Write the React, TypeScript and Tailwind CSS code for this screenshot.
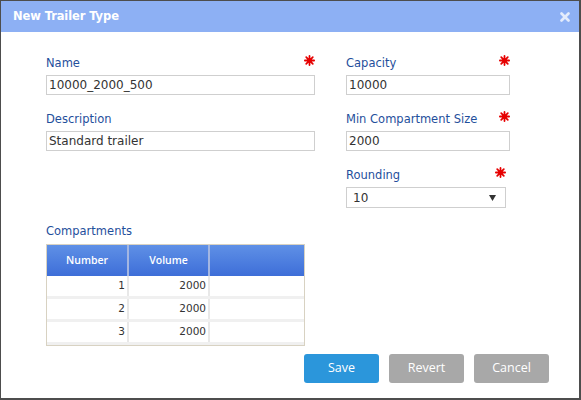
import React from 'react';

const Asterisk: React.FC = () => (
  <svg width="11" height="11" viewBox="0 0 10 10" className="shrink-0 -mt-[0.5px]">
    <g stroke="#e60000" strokeWidth="1.6" strokeLinecap="round">
      <line x1="5" y1="0.8" x2="5" y2="9.2" />
      <line x1="0.8" y1="5" x2="9.2" y2="5" />
      <line x1="2" y1="2" x2="8" y2="8" />
      <line x1="8" y1="2" x2="2" y2="8" />
    </g>
    <circle cx="5" cy="5" r="2.3" fill="#e60000" />
  </svg>
);

const Field: React.FC<{ label: string; value: string; required?: boolean }> = ({ label, value, required }) => (
  <div className="mb-4">
    <div className="flex justify-between items-start h-5">
      <span className="text-[11.5px] leading-[15px] pt-[1px] text-[#1f4f9c]">{label}</span>
      {required && <Asterisk />}
    </div>
    <input
      defaultValue={value}
      readOnly
      className="block w-full h-5 border border-[#cfcfcf] px-[2px] text-[12px] text-[#333] outline-none"
    />
  </div>
);

const rows = [1, 2, 3];

export default function App() {
  return (
    <div className="w-[581px] h-[400px] bg-white border-l border-t border-r-2 border-b-2 border-[#4d4d4d] flex flex-col font-['DejaVu_Sans',sans-serif]">
      {/* Title bar */}
      <div className="h-[31px] bg-[#8db0f4] flex items-center justify-between pl-3 pr-[9px]">
        <span className="text-white font-bold text-[11.5px] tracking-[-0.1px]">New Trailer Type</span>
        <svg width="10" height="10" viewBox="0 0 10 10">
          <g stroke="#e4ecfc" strokeWidth="2.6" strokeLinecap="round">
            <line x1="1.5" y1="1.5" x2="8.5" y2="8.5" />
            <line x1="8.5" y1="1.5" x2="1.5" y2="8.5" />
          </g>
        </svg>
      </div>

      <div className="flex-1 pl-[45px] pt-[23px]">
        <div className="flex gap-[31px]">
          <div className="w-[269px]">
            <Field label="Name" value="10000_2000_500" required />
            <Field label="Description" value="Standard trailer" />
          </div>
          <div className="w-[164px]">
            <Field label="Capacity" value="10000" required />
            <Field label="Min Compartment Size" value="2000" required />
            <div>
              <div className="flex justify-between items-start h-5 w-[160px]">
                <span className="text-[11.5px] leading-[15px] pt-[1px] text-[#1f4f9c]">Rounding</span>
                <Asterisk />
              </div>
              <div className="w-[160px] h-[21px] border border-[#cfcfcf] flex items-center justify-between pl-[6px] pr-[9px] text-[12px] text-[#333]">
                <span>10</span>
                <svg width="7" height="6" viewBox="0 0 7 6">
                  <path d="M0 0 H7 L3.5 6 Z" fill="#333" />
                </svg>
              </div>
            </div>
          </div>
        </div>

        {/* Compartments */}
        <div className="mt-4">
          <div className="text-[11.5px] leading-[15px] text-[#1f4f9c] mb-[5px]">Compartments</div>
          <div className="w-[259px] border border-[#d8d2c2] bg-white">
            <div className="flex h-[31px] bg-gradient-to-b from-[#5f90e6] to-[#3e6ed8] text-white text-[10.5px] font-semibold font-['Open_Sans',sans-serif]">
              <div className="w-[80px] flex items-center justify-center">Number</div>
              <div className="w-[2px] bg-[#a3b6e2]" />
              <div className="w-[79px] flex items-center justify-center">Volume</div>
              <div className="w-[2px] bg-[#a3b6e2]" />
              <div className="flex-1" />
            </div>
            {rows.map((n) => (
              <div key={n} className="flex h-[23px] border-b-[3px] border-[#f0f0f0] text-[10.5px] text-[#333]">
                <div className="w-[80px] flex items-center justify-end pr-[2px]">{n}</div>
                <div className="w-[2px] bg-[#e8e8e8]" />
                <div className="w-[79px] flex items-center justify-end pr-[2px]">2000</div>
                <div className="w-[2px] bg-[#e8e8e8]" />
                <div className="flex-1" />
              </div>
            ))}
          </div>
        </div>

        {/* Buttons */}
        <div className="flex justify-end gap-[10px] pr-[30px] mt-2 font-['Open_Sans',sans-serif] text-[12.5px] font-medium text-white">
          <button className="w-[75px] h-[29px] rounded-[3px] bg-[#2b96db]">Save</button>
          <button className="w-[75px] h-[29px] rounded-[3px] bg-[#a8a8a8]">Revert</button>
          <button className="w-[75px] h-[29px] rounded-[3px] bg-[#a8a8a8]">Cancel</button>
        </div>
      </div>
    </div>
  );
}
